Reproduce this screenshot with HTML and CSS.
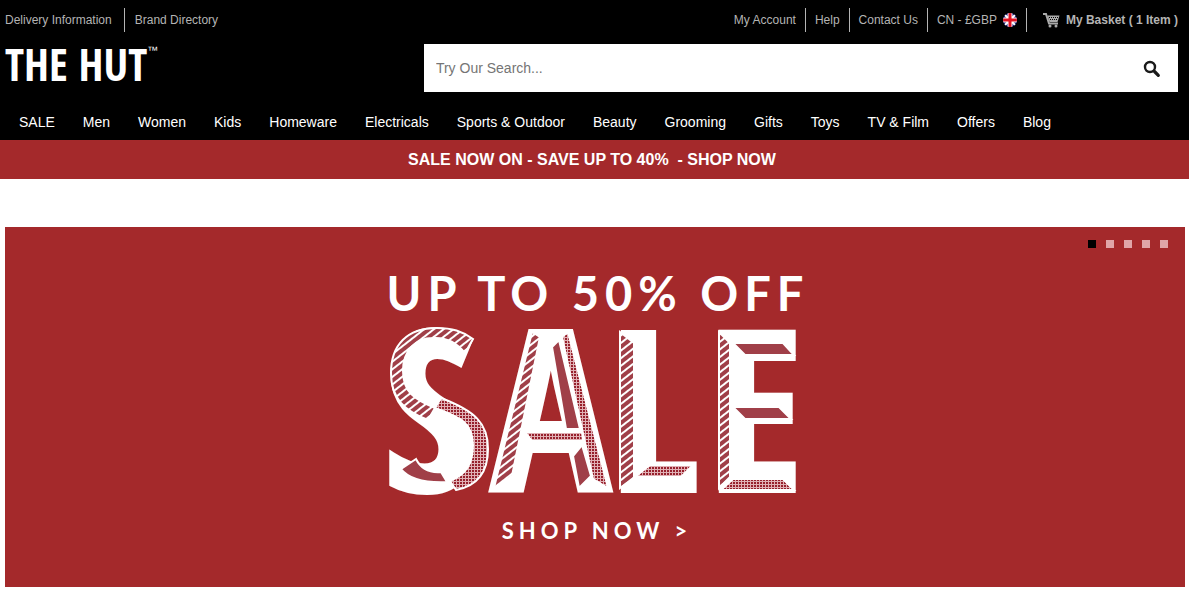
FILE: index.html
```
<!DOCTYPE html>
<html lang="en">
<head>
<meta charset="utf-8">
<title>The Hut</title>
<link rel="stylesheet" href="styles.css">
</head>
<body>

<header class="header">
  <div class="topbar">
    <ul class="links">
      <li><a href="#">Delivery Information</a></li>
      <li><a href="#">Brand Directory</a></li>
    </ul>
    <ul class="links account">
      <li><a href="#">My Account</a></li>
      <li><a href="#">Help</a></li>
      <li><a href="#">Contact Us</a></li>
      <li><a href="#">CN - £GBP
        <svg viewBox="0 0 14 14" width="14" height="14" aria-hidden="true">
          <clipPath id="round"><circle cx="7" cy="7" r="7"/></clipPath>
          <g clip-path="url(#round)">
            <path fill="#14147a" d="M0 0h14v14H0z"/>
            <path stroke="#fff" stroke-width="2" d="M0 0l14 14M14 0L0 14"/>
            <path stroke="#fff" stroke-width="5" d="M7 0v14M0 7h14"/>
            <path stroke="#e01020" stroke-width="3" d="M7 0v14M0 7h14"/>
          </g>
        </svg></a></li>
      <li class="basket"><a href="#">
        <svg viewBox="0 0 17 16" width="17" height="16" aria-hidden="true">
          <path fill="none" stroke="#aaa" stroke-width="2" d="M0 2h3l3 9.500h9"/>
          <path fill="#aaa" d="M4.500 3.500h12L14.500 10H6.500z"/>
          <path stroke="#000" stroke-width="1" stroke-dasharray="1 1" d="M6 5.500h9M7 7.500h7"/>
          <circle cx="7" cy="14" r="1.500" fill="#aaa"/>
          <circle cx="13" cy="14" r="1.500" fill="#aaa"/>
        </svg>
        My Basket ( 1 Item )</a></li>
    </ul>
  </div>

  <div class="brand">
    <a class="logo" href="#">THE HUT<sup>™</sup></a>
    <form class="search">
      <input type="search" placeholder="Try Our Search..." aria-label="Search">
      <button type="submit" aria-label="Search">
        <svg viewBox="0 0 18 18" width="18" height="18" aria-hidden="true">
          <circle cx="7" cy="7" r="5" fill="none" stroke="#1a1a1a" stroke-width="2.400"/>
          <path stroke="#1a1a1a" stroke-width="3.200" stroke-linecap="round" d="M11.500 11.500l3.800 3.800"/>
        </svg>
      </button>
    </form>
  </div>

  <nav class="nav">
    <a href="#">SALE</a>
    <a href="#">Men</a>
    <a href="#">Women</a>
    <a href="#">Kids</a>
    <a href="#">Homeware</a>
    <a href="#">Electricals</a>
    <a href="#">Sports &amp; Outdoor</a>
    <a href="#">Beauty</a>
    <a href="#">Grooming</a>
    <a href="#">Gifts</a>
    <a href="#">Toys</a>
    <a href="#">TV &amp; Film</a>
    <a href="#">Offers</a>
    <a href="#">Blog</a>
  </nav>
</header>

<a class="promo" href="#">SALE NOW ON - SAVE UP TO 40% &nbsp;- SHOP NOW</a>

<main class="hero">
  <div class="dots">
    <button class="on" aria-label="Slide 1"></button>
    <button aria-label="Slide 2"></button>
    <button aria-label="Slide 3"></button>
    <button aria-label="Slide 4"></button>
    <button aria-label="Slide 5"></button>
  </div>
  <p class="offer">UP TO 50% OFF</p>
  <svg class="sale" viewBox="0 0 420 174" width="420" height="174">
    <defs>
      <pattern id="hatch" width="6" height="6" patternUnits="userSpaceOnUse" patternTransform="rotate(-38)">
        <path fill="#fff" d="M0 0h6v6H0z"/>
        <path fill="#a03f48" d="M0 0h6v4H0z"/>
      </pattern>
      <pattern id="mesh" width="3" height="3" patternUnits="userSpaceOnUse">
        <path fill="#96202c" d="M0 0h3v3H0z"/>
        <path fill="#e0b0b4" d="M2 0h1v3H0V2h2z"/>
      </pattern>
    </defs>
    <text x="0 107 225 323" y="167">SALE</text>

    <g stroke="#fff" stroke-width="2">
      <!-- S -->
      <path fill="url(#hatch)" d="M88 16C77 8 67 5 52 5C22 5 6 22 6 50C6 76 20 88 43 97L50 85C28 76 18 68 18 48C18 28 30 15 48 15C62 14 72 20 80 30z"/>
      <path fill="url(#mesh)" d="M56 75C90 88 103 100 103 126C103 150 92 163 71 167L65 158C80 152 88 142 88 122C88 100 75 94 50 85z"/>
      <path fill="#a03f48" d="M31 136L16 146C24 156 38 160 62 159L56 149C44 150 36 146 31 136z"/>

      <!-- A -->
      <path fill="url(#hatch)" d="M147 9l8 5-28 139-18 12z"/>
      <path fill="#a03f48" d="M167 24l7-7 21 89h-14z"/>
      <path fill="url(#mesh)" d="M140 109h57l1 9h-51z"/>
      <path fill="url(#mesh)" d="M177 14l6-5 40 156-15-9z"/>
      <path fill="#a03f48" d="M188 133l9-11 9 31-12 12z"/>

      <!-- L -->
      <path fill="url(#hatch)" d="M235 9l14 11v135l-14 10z"/>
      <path fill="url(#mesh)" d="M265 142h43l-12 12h-46z"/>

      <!-- E -->
      <path fill="url(#hatch)" d="M334 9l11 11v134l-11 11z"/>
      <path fill="#a03f48" d="M348 20h50l11 12h-49z"/>
      <path fill="#a03f48" d="M348 84h46l12 12h-46z"/>
      <path fill="url(#mesh)" d="M348 156h50l11 11h-73z"/>
    </g>
  </svg>
  <a class="shop" href="#">SHOP NOW &gt;</a>
</main>

</body>
</html>
```
FILE: styles.css
```
* {
  box-sizing: border-box;
}

body {
  margin: 0;
  background: #fff;
  font-family: "Liberation Sans", Arial, sans-serif;
}

a {
  color: inherit;
  text-decoration: none;
}

/* header */
.header {
  background: #000;
  color: #fff;
}

.topbar {
  display: flex;
  justify-content: space-between;
  padding: 8px 2px 12px 5px;
  font-size: 12px;
  color: #b4b4b4;
}

.links {
  display: flex;
  margin: 0;
  padding: 0;
  list-style: none;
  line-height: 24px;
}

.links li {
  padding: 0 12px 0 10px;
  border-right: 1px solid #b4b4b4;
}

.links li:first-child {
  padding-left: 0;
}

.links li:last-child {
  border-right: 0;
}

.links a {
  display: flex;
  align-items: center;
  gap: 6px;
}

.account li {
  padding: 0 9px;
}

.links .basket {
  padding-left: 16px;
  font-weight: bold;
}

.brand {
  display: grid;
  grid-template-columns: 5fr 9fr;
  padding: 0 11px 12px 5px;
}

.logo {
  display: flex;
  font-family: "Open Sans Condensed", "Liberation Sans", sans-serif;
  font-size: 44px;
  font-weight: bold;
  line-height: 40px;
}

.logo sup {
  font: 11px "Liberation Sans", Arial, sans-serif;
}

.search {
  display: flex;
  height: 48px;
  background: #fff;
}

.search input {
  flex: 1;
  padding: 0 12px;
  border: 0;
  background: none;
  font: 14px "Liberation Sans", Arial, sans-serif;
}

.search input::placeholder {
  color: #757575;
}

.search button {
  display: flex;
  align-items: center;
  justify-content: center;
  width: 52px;
  padding: 2px 0 0;
  border: 0;
  background: none;
}

.nav {
  display: flex;
  padding: 0 5px;
  font-size: 14px;
  line-height: 36px;
}

.nav a {
  padding: 0 14px;
}

.promo {
  display: block;
  padding: 1px 5px 0 0;
  background: #a4292b;
  color: #fff;
  font-size: 16px;
  font-weight: bold;
  line-height: 38px;
  text-align: center;
}

/* hero banner */
.hero {
  position: relative;
  display: flex;
  flex-direction: column;
  align-items: center;
  margin: 48px 4px 8px 5px;
  padding: 38px 0 42px;
  background: #a4292b;
  color: #fff;
  font-family: Lato, sans-serif;
}

.dots {
  position: absolute;
  top: 13px;
  right: 17px;
  display: flex;
  gap: 10px;
}

.dots button {
  width: 8px;
  height: 8px;
  padding: 0;
  border: 0;
  background: #e0a5a8;
}

.dots .on {
  background: #000;
}

.offer {
  margin: 0 0 2px;
  padding-left: 6px;
  font-size: 47px;
  font-weight: bold;
  line-height: 56px;
  letter-spacing: 6px;
}

.sale {
  overflow: visible;
}

.sale text {
  fill: #fff;
  stroke: #fff;
  stroke-width: 6px;
  font-family: "Open Sans Condensed", sans-serif;
  font-size: 220px;
  font-weight: bold;
}

.shop {
  margin-top: 20px;
  padding-left: 4px;
  font-size: 22px;
  font-weight: bold;
  line-height: 28px;
  letter-spacing: 5px;
}
```
